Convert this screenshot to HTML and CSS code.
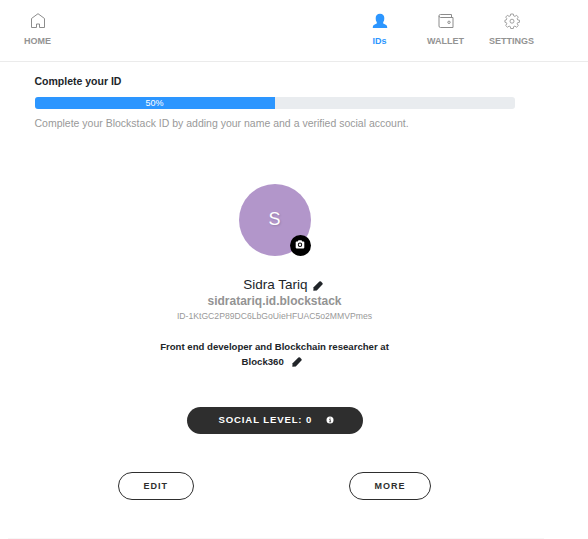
FILE: index.html
```html
<!DOCTYPE html>
<html lang="en">
<head>
    <meta charset="UTF-8">
    <meta name="viewport" content="width=device-width, initial-scale=1.0">
    <title>Blockstack - IDs</title>
    <link rel="stylesheet" href="styles.css">
</head>
<body>
    <!-- navbar -->
    <header class="navbar">
        <a class="nav-item">
            <svg class="nav-icon" viewBox="0 0 16 16"><path d="M1.500 5.500 8 .700l6.500 4.800v9h-5v-3.500h-3v3.500h-5z"/></svg>
            <span>HOME</span>
        </a>
        <nav class="nav-right">
            <a class="nav-item active">
                <svg class="nav-icon" viewBox="0 0 16 16"><path d="M8 .8C5.200.8 3.700 2.500 3.700 5c0 1.800.3 3.200 1.100 4.200v1.400C2.500 11.400.8 12.300.8 14.200v.8h14.400v-.8c0-1.900-1.700-2.800-4-3.600V9.200c.8-1 1.100-2.400 1.100-4.200C12.300 2.500 10.800.8 8 .8z"/></svg>
                <span>IDs</span>
            </a>
            <a class="nav-item">
                <svg class="nav-icon" viewBox="0 0 16 16"><path d="M13.500 4V1.500H2.500Q1 1.500 1 2.800T2.500 4.500h12.500v10H2.500Q1 14.500 1 13V3"/><circle cx="11" cy="9.300" r="1.200"/></svg>
                <span>WALLET</span>
            </a>
            <a class="nav-item">
                <svg class="nav-icon gear" viewBox="0 0 16 16"><path d="M6.700 1h2.600l.4 1.900 1.200.5 1.700-1.100 1.700 1.800-1.100 1.600.5 1.200 1.900.4v1.900l-1.900.4-.5 1.200 1.100 1.700-1.700 1.700-1.700-1.100-1.200.5-.4 1.900H6.700l-.4-1.900-1.200-.5-1.700 1.100-1.700-1.700 1.100-1.700-.5-1.200L.9 9.200V7.300l1.400-.4.5-1.200-1.100-1.600 1.700-1.800 1.700 1.100 1.200-.5z"/><circle cx="8" cy="8.200" r="2"/></svg>
                <span>SETTINGS</span>
            </a>
        </nav>
    </header>

    <main class="content">
        <!-- progress -->
        <section class="complete">
            <h1 class="complete-title">Complete your ID</h1>
            <div class="progress">
                <div class="progress-bar" style="width: 50%">50%</div>
            </div>
            <p class="complete-text">Complete your Blockstack ID by adding your name and a verified social account.</p>
        </section>

        <!-- profile -->
        <section class="profile">
            <div class="avatar">
                <span class="avatar-letter">S</span>
                <span class="camera">
                    <svg viewBox="0 0 10 9"><path fill-rule="evenodd" d="M3.500.3h3l.8 1.100H8.500q.8 0 .8.800v5.400q0 .8-.8.800h-7q-.8 0-.8-.8V2.200q0-.8.8-.8h1.200zM5 2.600a2.200 2.200 0 1 0 0 4.400 2.200 2.200 0 0 0 0-4.400z"/><circle cx="5" cy="4.800" r="1.200"/></svg>
                </span>
            </div>
            <h2 class="name">Sidra Tariq <svg class="pencil" viewBox="0 0 10 10"><path d="M.3 9.700.6 6.200 6.400.6q.8-.7 1.600 0l1.400 1.400q.7.800 0 1.600L3.800 9.400z"/></svg></h2>
            <p class="username">sidratariq.id.blockstack</p>
            <p class="address">ID-1KtGC2P89DC6LbGoUieHFUAC5o2MMVPmes</p>
            <p class="bio">Front end developer and Blockchain researcher at Block360 <svg class="pencil" viewBox="0 0 10 10"><path d="M.3 9.700.6 6.200 6.400.6q.8-.7 1.600 0l1.400 1.400q.7.800 0 1.600L3.800 9.400z"/></svg></p>
            <div class="social">
                <span>SOCIAL LEVEL: 0</span>
                <svg class="info" viewBox="0 0 8 8"><circle cx="4" cy="4" r="3.500" fill="#fff"/><path d="M3.200 3.600h1.100v2.200M3.100 5.800h2M3.600 2.100h.9" stroke="#2e2e2e" stroke-width=".8" fill="none"/></svg>
            </div>
            <div class="buttons">
                <button class="button">EDIT</button>
                <button class="button">MORE</button>
            </div>
        </section>
    </main>
    <hr class="divider">
</body>
</html>
```
FILE: styles.css
```css
:root {
    --blue: #2c96ff;
    --dark: #212529;
    --gray: #939393;
}
* {
    box-sizing: border-box;
}
body {
    margin: 0;
    overflow: hidden;
    background-color: #fff;
    color: var(--dark);
    font-family: "Liberation Sans", Arial, sans-serif;
}
h1, h2, p {
    margin: 0;
}
.navbar {
    display: flex;
    justify-content: space-between;
    height: 62px;
    padding: 13px 43.5px 0 4.5px;
    border-bottom: 1px solid #ebebeb;
}
.nav-right {
    display: flex;
}
.nav-item {
    display: flex;
    flex-direction: column;
    align-items: center;
    width: 66px;
    color: var(--gray);
    font-size: 9px;
    font-weight: bold;
    line-height: 12px;
}
.nav-icon {
    width: 16px;
    height: 16px;
    margin-bottom: 6px;
    fill: none;
    stroke: #8c8c8c;
    stroke-width: 1;
}
.gear {
    stroke-width: .8;
}
.active {
    color: var(--blue);
}
.active .nav-icon {
    fill: var(--blue);
    stroke: none;
}
.content {
    width: 480px;
    margin-left: 34.5px;
}
.complete-title {
    padding-top: 12px;
    font-size: 10.5px;
    line-height: 15px;
}
.progress {
    height: 12px;
    margin: 8px 0 7px;
    overflow: hidden;
    background-color: #e9ecef;
    border-radius: 3px;
}
.progress-bar {
    height: 12px;
    background-color: var(--blue);
    color: #fff;
    font-size: 9px;
    line-height: 12px;
    text-align: center;
}
.complete-text {
    color: #999;
    font-size: 10.5px;
    line-height: 15px;
}
.profile {
    display: flex;
    flex-direction: column;
    align-items: center;
    padding-top: 53px;
    text-align: center;
}
.avatar {
    position: relative;
    width: 72px;
    height: 72px;
    background-color: #b296ca;
    border-radius: 50%;
}
.avatar-letter {
    color: #fff;
    font-size: 18px;
    line-height: 70px;
    text-shadow: 1px 1px 2px rgba(0, 0, 0, .15);
}
.camera {
    position: absolute;
    right: 0;
    bottom: 0;
    display: flex;
    align-items: center;
    justify-content: center;
    width: 21px;
    height: 21px;
    padding-bottom: 2px;
    background-color: #000;
    border-radius: 50%;
}
.camera svg {
    width: 10px;
    height: 9px;
    fill: #fff;
}
.name {
    margin-top: 20px;
    padding-left: 17.5px;
    font-size: 13.5px;
    font-weight: normal;
    line-height: 18px;
}
.pencil {
    width: 10px;
    height: 10px;
    margin-left: 2px;
    fill: var(--dark);
    vertical-align: -2px;
}
.username {
    color: var(--gray);
    font-size: 12px;
    font-weight: bold;
    line-height: 14px;
}
.address {
    margin-top: 2px;
    color: #999;
    font-size: 8.65px;
    line-height: 12px;
}
.bio {
    width: 240px;
    margin-top: 17px;
    font-size: 9.6px;
    font-weight: bold;
    line-height: 15px;
}
.bio .pencil {
    margin: 0 5px 0 6px;
    vertical-align: -1.5px;
}
.social {
    display: flex;
    align-items: center;
    width: 176px;
    height: 27px;
    margin-top: 38px;
    padding: 0 29px 1px 32px;
    justify-content: space-between;
    background-color: #2e2e2e;
    border-radius: 14px;
    color: #fff;
    font-size: 9.6px;
    font-weight: bold;
    letter-spacing: .85px;
}
.social span {
    padding-bottom: 1px;
}
.info {
    width: 8px;
    height: 8px;
}
.buttons {
    display: flex;
    gap: 155px;
    margin-top: 38px;
}
.button {
    height: 28px;
    padding: 0 24.75px;
    background-color: #fff;
    border: 1px solid #2e2e2e;
    border-radius: 14px;
    color: #2e2e2e;
    font-family: inherit;
    font-size: 9px;
    font-weight: bold;
    letter-spacing: 1px;
}
.divider {
    width: 536px;
    margin: 38px 0 0 8px;
    border: 0;
    border-top: 1px solid #f7f7f7;
}
```
